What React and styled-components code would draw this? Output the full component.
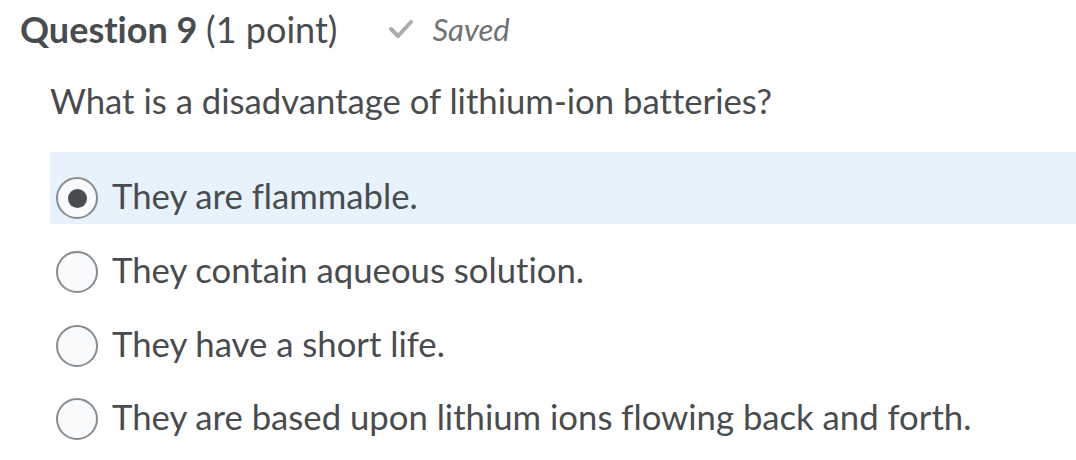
import React from 'react';
import styled, { createGlobalStyle } from 'styled-components';

const GlobalStyle = createGlobalStyle`
  body {
    margin: 0;
    background: #ffffff;
    font-family: Lato, "Open Sans", sans-serif;
    font-variant-ligatures: none;
    color: #494c4e;
  }
`;

const Page = styled.div`
  width: 1076px;
  height: 460px;
  overflow: hidden;
`;

const Header = styled.div`
  display: flex;
  align-items: center;
  padding: 5px 0 0 20px;
  height: 48px;
`;

const Heading = styled.h2`
  margin: 0;
  font-size: 36px;
  line-height: 48px;
  font-weight: 700;
  color: #494c4e;
`;

const Points = styled.span`
  font-weight: 400;
`;

const SavedTag = styled.span`
  display: flex;
  align-items: center;
  gap: 18px;
  margin-left: 51px;
  font-size: 31px;
  font-style: italic;
  color: #6e7376;
`;

const Body = styled.div`
  padding-left: 50px;
`;

const Question = styled.p`
  margin: 26px 0 0;
  font-size: 34.7px;
  line-height: 44px;
`;

const Options = styled.div`
  margin-top: 29px;
  display: flex;
  flex-direction: column;
  gap: 1.8px;
`;

const Option = styled.label`
  display: flex;
  align-items: flex-start;
  gap: 14px;
  box-sizing: border-box;
  height: 72px;
  padding: 23px 0 0 6px;
  background: ${(p) => (p.$selected ? '#e8f2fc' : 'transparent')};
  font-size: 34.7px;
  line-height: 42px;
  cursor: pointer;
`;

const Radio = styled.span`
  flex: none;
  width: 42px;
  height: 42px;
  margin-top: 2px;
  box-sizing: border-box;
  border-radius: 50%;
  border: 2px solid #868c8f;
  background: #f9fafb;
  display: flex;
  align-items: center;
  justify-content: center;

  &::after {
    content: '';
    display: ${(p) => (p.$checked ? 'block' : 'none')};
    width: 19px;
    height: 19px;
    border-radius: 50%;
    background: #494c4e;
  }
`;

const Check = () => (
  <svg width="26" height="20" viewBox="0 0 26 20">
    <path d="M3 10 L10 17 L23 3" fill="none" stroke="#a9adb0" strokeWidth="4" strokeLinecap="round" strokeLinejoin="round" />
  </svg>
);

const answers = [
  'They are flammable.',
  'They contain aqueous solution.',
  'They have a short life.',
  'They are based upon lithium ions flowing back and forth.',
];

const App = () => {
  return (
    <Page>
      <GlobalStyle />
      <Header>
        <Heading>
          Question 9 <Points>(1 point)</Points>
        </Heading>
        <SavedTag>
          <Check />
          Saved
        </SavedTag>
      </Header>
      <Body>
        <Question>What is a disadvantage of lithium-ion batteries?</Question>
        <Options>
          {answers.map((a, i) => (
            <Option key={a} $selected={i === 0}>
              <Radio $checked={i === 0} />
              {a}
            </Option>
          ))}
        </Options>
      </Body>
    </Page>
  );
};

export default App;
